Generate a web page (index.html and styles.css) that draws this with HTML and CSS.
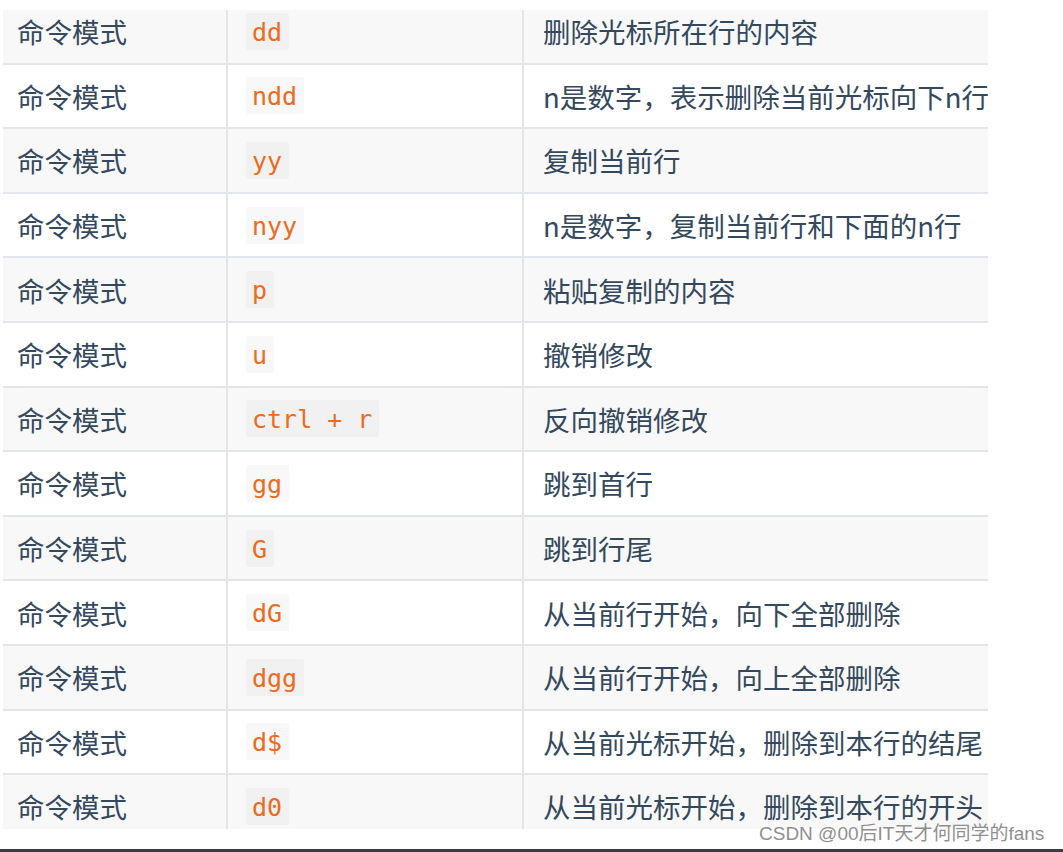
FILE: index.html
```html
<!DOCTYPE html>
<html lang="zh-CN">
<head>
<meta charset="utf-8">
<title>vim 命令模式</title>
<link rel="stylesheet" href="styles.css">
</head>
<body>
<div class="page">
  <div class="frame">
    <div class="table">
      <div class="row"><div class="cell c1">命令模式</div><div class="cell c2"><code>dd</code></div><div class="cell c3">删除光标所在行的内容</div></div>
      <div class="row"><div class="cell c1">命令模式</div><div class="cell c2"><code>ndd</code></div><div class="cell c3">n是数字，表示删除当前光标向下n行</div></div>
      <div class="row"><div class="cell c1">命令模式</div><div class="cell c2"><code>yy</code></div><div class="cell c3">复制当前行</div></div>
      <div class="row"><div class="cell c1">命令模式</div><div class="cell c2"><code>nyy</code></div><div class="cell c3">n是数字，复制当前行和下面的n行</div></div>
      <div class="row"><div class="cell c1">命令模式</div><div class="cell c2"><code>p</code></div><div class="cell c3">粘贴复制的内容</div></div>
      <div class="row"><div class="cell c1">命令模式</div><div class="cell c2"><code>u</code></div><div class="cell c3">撤销修改</div></div>
      <div class="row"><div class="cell c1">命令模式</div><div class="cell c2"><code>ctrl + r</code></div><div class="cell c3">反向撤销修改</div></div>
      <div class="row"><div class="cell c1">命令模式</div><div class="cell c2"><code>gg</code></div><div class="cell c3">跳到首行</div></div>
      <div class="row"><div class="cell c1">命令模式</div><div class="cell c2"><code>G</code></div><div class="cell c3">跳到行尾</div></div>
      <div class="row"><div class="cell c1">命令模式</div><div class="cell c2"><code>dG</code></div><div class="cell c3">从当前行开始，向下全部删除</div></div>
      <div class="row"><div class="cell c1">命令模式</div><div class="cell c2"><code>dgg</code></div><div class="cell c3">从当前行开始，向上全部删除</div></div>
      <div class="row"><div class="cell c1">命令模式</div><div class="cell c2"><code>d$</code></div><div class="cell c3">从当前光标开始，删除到本行的结尾</div></div>
      <div class="row"><div class="cell c1">命令模式</div><div class="cell c2"><code>d0</code></div><div class="cell c3">从当前光标开始，删除到本行的开头</div></div>
    </div>
  </div>
  <div class="watermark">CSDN @00后IT天才何同学的fans</div>
</div>
<div class="bar"></div>
</body>
</html>
```

FILE: styles.css
```css
html, body {
  margin: 0;
  padding: 0;
  background: #ffffff;
}

body {
  width: 1063px;
  height: 852px;
  overflow: hidden;
  font-family: "Noto Sans CJK SC", "Noto Sans", sans-serif;
  color: #34495e;
}

.page {
  position: relative;
  height: 849px;
  padding: 10px 0 0 3px;
  box-sizing: border-box;
}

.frame {
  width: 985px;
  height: 819px;
  overflow: hidden;
}

.table {
  margin-top: -10px;
}

.row {
  display: grid;
  grid-template-columns: 223px 296px 466px;
  height: 64.6px;
  box-sizing: border-box;
  border-bottom: 2px solid #e2e5e9;
  background: #ffffff;
}

.row:nth-child(odd) {
  background: #f8f8f8;
}

.cell {
  display: flex;
  align-items: center;
  font-size: 27.5px;
  line-height: 28px;
  white-space: nowrap;
  overflow: hidden;
}

.c1 {
  padding-left: 14px;
}

.c2 {
  border-left: 2px solid #e2e5e9;
  padding-left: 18px;
}

.c3 {
  border-left: 2px solid #e2e5e9;
  padding-left: 19px;
}

code {
  display: inline-block;
  font-family: "DejaVu Sans Mono", "Liberation Mono", monospace;
  font-size: 25px;
  line-height: 25px;
  padding: 7px 7px 5px 6px;
  color: #ec6b1c;
  background: rgba(0, 0, 0, 0.028);
  border-radius: 2px;
}

.watermark {
  position: absolute;
  left: 759px;
  top: 824px;
  font-family: "Liberation Sans", "Noto Sans CJK SC", sans-serif;
  font-size: 19px;
  line-height: 19px;
  color: #8f8f8f;
  white-space: nowrap;
  text-shadow: 0 0 1px rgba(255, 255, 255, 0.8);
}

.bar {
  height: 3px;
  background: #3b3e41;
}
```
